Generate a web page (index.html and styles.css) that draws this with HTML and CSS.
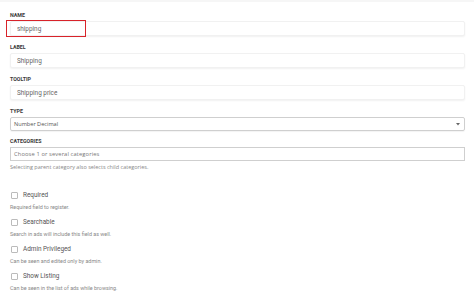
FILE: index.html
```html
<!DOCTYPE html>
<html>
<head>
    <meta charset="UTF-8">
    <title>Custom field</title>
    <link rel="stylesheet" href="styles.css">
</head>
<body>
<form class="field-form" action="?">
    <div class="field">
        <label class="field-label">Name</label>
        <input class="soft-input" type="text" value="shipping" name="name">
        <span class="highlight"></span>
    </div>

    <div class="field">
        <label class="field-label">Label</label>
        <input class="soft-input" type="text" value="Shipping" name="label">
    </div>

    <div class="field">
        <label class="field-label">Tooltip</label>
        <input class="soft-input" type="text" value="Shipping price" name="tooltip">
    </div>

    <div class="field field-tight">
        <label class="field-label">Type</label>
        <div class="plain-select">
            <span>Number Decimal</span>
            <svg class="caret" width="4" height="4" viewBox="0 0 4 4"><path d="M0 1h4L2 3.4z" fill="#666"/></svg>
        </div>
    </div>

    <div class="field field-tight">
        <label class="field-label">Categories</label>
        <div class="plain-box">Choose 1 or several categories</div>
        <p class="field-help wide">Selecting parent category also selects child categories.</p>
    </div>

    <!-- 选项 -->
    <div class="checks">
        <div class="check">
            <label class="check-row"><span class="box"></span>Required</label>
            <p class="field-help">Required field to register.</p>
        </div>
        <div class="check">
            <label class="check-row"><span class="box"></span>Searchable</label>
            <p class="field-help">Search in ads will include this field as well.</p>
        </div>
        <div class="check">
            <label class="check-row"><span class="box"></span>Admin Privileged</label>
            <p class="field-help">Can be seen and edited only by admin.</p>
        </div>
        <div class="check">
            <label class="check-row"><span class="box"></span>Show Listing</label>
            <p class="field-help">Can be seen in the list of ads while browsing.</p>
        </div>
    </div>
</form>
</body>
</html>
```

FILE: styles.css
```css
/* 页面 */
body {
    margin: 0;
    background-color: #fff;
    font-family: Roboto, "Liberation Sans", Arial, sans-serif;
    color: #333;
    border-top: 2px solid #f6f6f6;
}
.field-form {
    padding: 9px 9px 0 10px;
}

/* 字段 */
.field {
    position: relative;
    display: flex;
    flex-direction: column;
    margin-bottom: 7px;
}
.field-tight {
    margin-bottom: 6px;
}
.field-label {
    font-size: 5.3px;
    line-height: 8px;
    font-weight: bold;
    text-transform: uppercase;
    color: #3a3a3a;
    margin-bottom: 2px;
}
.soft-input {
    box-sizing: border-box;
    height: 15px;
    margin: 0;
    padding: 0 6px;
    border: 1px solid #f1f1f1;
    border-radius: 2px;
    box-shadow: 0 1px 2px rgba(0, 0, 0, 0.06);
    font-family: Roboto, "Liberation Sans", Arial, sans-serif;
    font-size: 6.4px;
    color: #666;
    outline: none;
}
.highlight {
    position: absolute;
    left: -4px;
    top: 9px;
    width: 80px;
    height: 17px;
    box-sizing: border-box;
    border: 1.5px solid #d8232a;
}

/* 下拉和分类 */
.plain-select, .plain-box {
    box-sizing: border-box;
    height: 14px;
    display: flex;
    align-items: center;
    justify-content: space-between;
    padding: 0 4px 0 3px;
    border: 1px solid #cfcfcf;
    font-family: "Open Sans", "DejaVu Sans", sans-serif;
    font-size: 5.6px;
    color: #555;
}
.plain-select {
    border-radius: 2px;
    box-shadow: 0 1px 1px rgba(0, 0, 0, 0.05);
}
.plain-box {
    font-size: 5.8px;
    color: #777;
    letter-spacing: 0.1px;
}
.caret {
    display: block;
}
.field-help {
    margin: 2px 0 0;
    font-size: 5.4px;
    line-height: 8px;
    color: #888;
}
.field-help.wide {
    font-family: "Open Sans", "DejaVu Sans", sans-serif;
    font-size: 5.5px;
}

/* 复选框 */
.checks {
    margin-top: 19px;
}
.check {
    margin-bottom: 5px;
}
.check-row {
    display: flex;
    align-items: center;
    gap: 5px;
    height: 10px;
    font-size: 6.4px;
    color: #555;
}
.box {
    width: 7px;
    height: 7px;
    box-sizing: border-box;
    border: 1px solid #bbb;
    border-radius: 1px;
    margin-left: 1px;
}
.check .field-help {
    margin-top: 3px;
    line-height: 9px;
}
```
